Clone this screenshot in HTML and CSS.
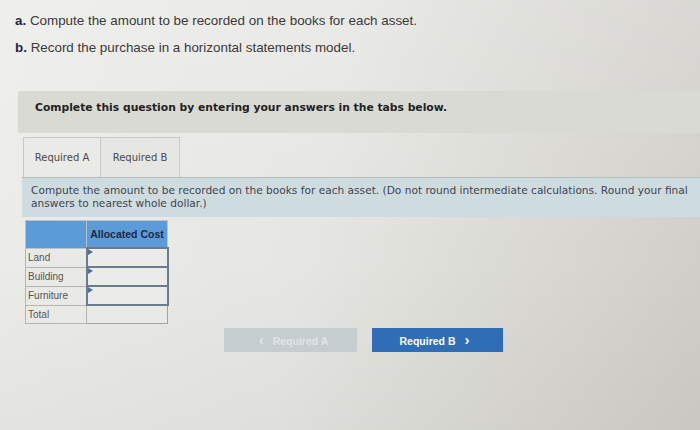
FILE: index.html
```html
<!DOCTYPE html>
<html>
<head>
<meta charset="utf-8">
<link rel="stylesheet" href="styles.css">
</head>
<body>
<div class="page">
  <div class="parts">
    <p class="part"><b class="lbl">a.</b> Compute the amount to be recorded on the books for each asset.</p>
    <p class="part"><b class="lbl">b.</b> Record the purchase in a horizontal statements model.</p>
  </div>
  <div class="panel">
    <div class="banner">Complete this question by entering your answers in the tabs below.</div>
    <div class="tabs">
      <div class="tab active">Required A</div>
      <div class="tab">Required B</div>
    </div>
    <div class="instr">Compute the amount to be recorded on the books for each asset. (Do not round intermediate calculations. Round your final answers to nearest whole dollar.)</div>
    <table class="grid">
      <tr><th class="blank"></th><th class="head">Allocated Cost</th></tr>
      <tr><td class="name">Land</td><td class="val input"><span class="flag"></span></td></tr>
      <tr><td class="name">Building</td><td class="val input"><span class="flag"></span></td></tr>
      <tr><td class="name">Furniture</td><td class="val input"><span class="flag"></span></td></tr>
      <tr><td class="name">Total</td><td class="val"></td></tr>
    </table>
    <div class="nav">
      <div class="btn prev"><span class="chev">&lsaquo;</span> Required A</div>
      <div class="btn next">Required B <span class="chev">&rsaquo;</span></div>
    </div>
  </div>
</div>
</body>
</html>
```
FILE: styles.css
```css
html, body {
  margin: 0;
  padding: 0;
}
body {
  width: 700px;
  height: 430px;
  overflow: hidden;
  background: linear-gradient(100deg, #ecece9 0%, #e6e6e2 45%, #d7d6d1 80%, #cfcdc8 100%);
  font-family: "Liberation Sans", Arial, sans-serif;
}
.page {
  height: 430px;
  background: linear-gradient(180deg, rgba(255,255,255,0.15) 0%, rgba(255,255,255,0) 60%, rgba(0,0,0,0.03) 100%);
}
.parts {
  padding: 7px 0 0 15px;
}
.part {
  margin: 0;
  font-size: 13.4px;
  line-height: 27px;
  color: #3a3a3a;
}
.lbl {
  color: #1e2a44;
}
.panel {
  margin: 30px 0 0 18px;
}
.banner {
  height: 42px;
  box-sizing: border-box;
  padding: 10px 0 0 17px;
  background: #d9dad3;
  font-family: "DejaVu Sans", Verdana, sans-serif;
  font-weight: bold;
  font-size: 10.75px;
  color: #222;
}
.tabs {
  display: flex;
  margin: 4px 0 0 5px;
  height: 40px;
}
.tab {
  box-sizing: border-box;
  width: 79px;
  height: 40px;
  padding-top: 14px;
  text-align: center;
  font-family: "DejaVu Sans", Verdana, sans-serif;
  font-size: 10px;
  color: #4a4a4a;
  border: 1px solid #c9c9c5;
  border-bottom: none;
  border-left: none;
  background: #e6e7e3;
}
.tab.active {
  border-left: 1px solid #c9c9c5;
  width: 78px;
  background: #eaeae7;
}
.instr {
  margin-left: 4px;
  border-top: 1px solid #b7bcbd;
  background: #cfdcdf;
  height: 40px;
  box-sizing: border-box;
  padding: 6px 0 0 9px;
  font-family: "DejaVu Sans", Verdana, sans-serif;
  font-size: 10.6px;
  line-height: 13px;
  color: #3d4450;
}
.grid {
  margin: 3px 0 0 7px;
  border-collapse: collapse;
  font-family: "Liberation Sans", Arial, sans-serif;
}
.grid th {
  background: #5b9bd8;
  height: 26px;
  padding: 0;
  border: 1px solid #b9c3cc;
}
.grid .blank {
  width: 60px;
}
.grid .head {
  width: 80px;
  font-size: 10.5px;
  color: #1b2a45;
  text-align: center;
}
.grid td {
  height: 17px;
  padding: 0;
  border: 1px solid #b4b4b0;
  background: #e9e9e6;
}
.grid .name {
  font-size: 10px;
  color: #555;
  padding-left: 2px;
}
.grid .val {
  position: relative;
  border-color: #9ea3a8;
}
.grid .val.input {
  border: 2px solid #6b7a8c;
  background: #ebebe8;
}
.flag {
  position: absolute;
  left: 0;
  top: 0;
  width: 0;
  height: 0;
  border-top: 3px solid transparent;
  border-bottom: 3px solid transparent;
  border-left: 5px solid #4a6fa0;
}
.nav {
  display: flex;
  gap: 15px;
  margin: 4px 0 0 206px;
}
.btn {
  box-sizing: border-box;
  height: 24px;
  line-height: 24px;
  text-align: center;
  font-family: "Liberation Sans", Arial, sans-serif;
  font-size: 10.5px;
  font-weight: bold;
}
.btn.prev {
  width: 133px;
  background: #c6cdd1;
  color: #e1e5e7;
}
.btn.next {
  width: 131px;
  background: #2f6eb6;
  color: #fff;
}
.chev {
  font-size: 15px;
  margin: 0 6px;
}
```
